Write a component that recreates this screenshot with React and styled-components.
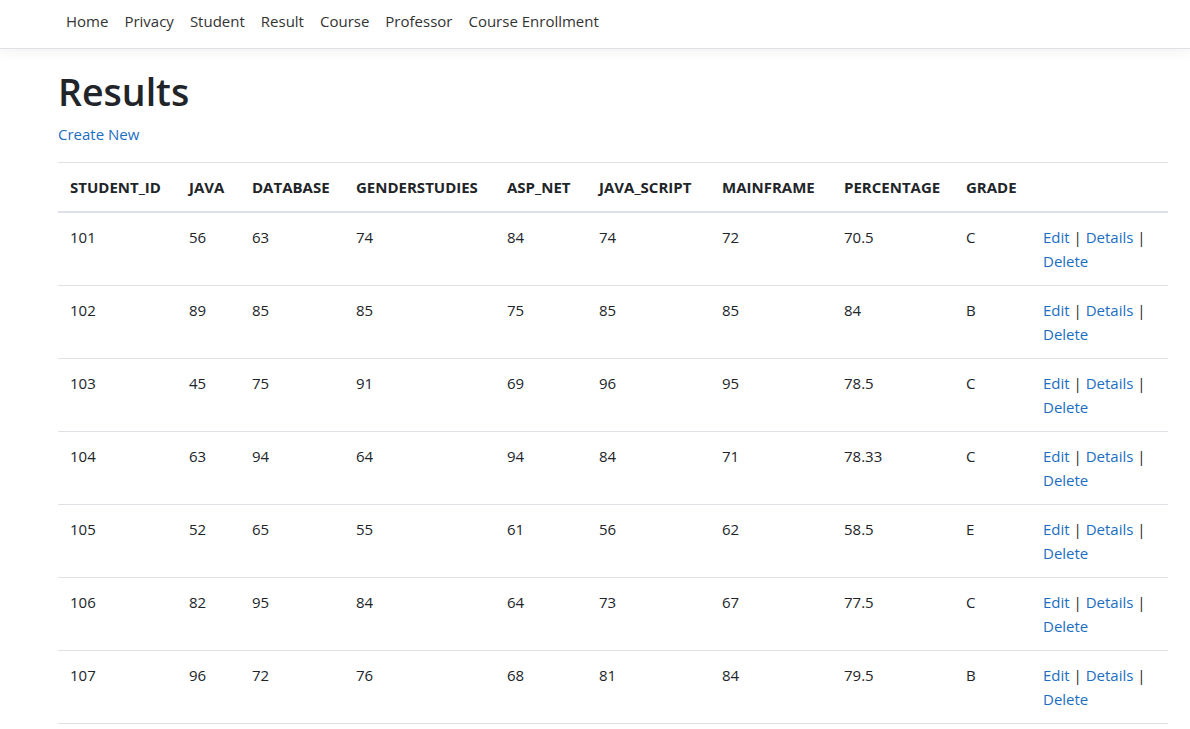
import React from "react";
import styled, { createGlobalStyle } from "styled-components";

const GlobalStyle = createGlobalStyle`
  html, body {
    margin: 0;
    padding: 0;
    background: #fff;
  }
  body {
    font-family: "Open Sans", "Noto Sans", "Liberation Sans", sans-serif;
    font-size: 15px;
    line-height: 24px;
    color: #212529;
  }
  * {
    box-sizing: border-box;
  }
`;

const navItems = [
  "Home",
  "Privacy",
  "Student",
  "Result",
  "Course",
  "Professor",
  "Course Enrollment",
];

const columns = [
  { key: "STUDENT_ID", width: 119 },
  { key: "JAVA", width: 63 },
  { key: "DATABASE", width: 104 },
  { key: "GENDERSTUDIES", width: 151 },
  { key: "ASP_NET", width: 92 },
  { key: "JAVA_SCRIPT", width: 123 },
  { key: "MAINFRAME", width: 122 },
  { key: "PERCENTAGE", width: 122 },
  { key: "GRADE", width: 77 },
];

const results = [
  [101, 56, 63, 74, 84, 74, 72, "70.5", "C"],
  [102, 89, 85, 85, 75, 85, 85, "84", "B"],
  [103, 45, 75, 91, 69, 96, 95, "78.5", "C"],
  [104, 63, 94, 64, 94, 84, 71, "78.33", "C"],
  [105, 52, 65, 55, 61, 56, 62, "58.5", "E"],
  [106, 82, 95, 84, 64, 73, 67, "77.5", "C"],
  [107, 96, 72, 76, 68, 81, 84, "79.5", "B"],
];

const App = () => {
  return (
    <>
      <GlobalStyle />
      <Navbar>
        <NavInner>
          {navItems.map((item) => (
            <NavLink key={item} href="#">
              {item}
            </NavLink>
          ))}
        </NavInner>
      </Navbar>
      <Main>
        <Title>Results</Title>
        <Paragraph>
          <Link href="#">Create New</Link>
        </Paragraph>
        <Table>
          <colgroup>
            {columns.map((c) => (
              <col key={c.key} style={{ width: c.width }} />
            ))}
            <col />
          </colgroup>
          <thead>
            <tr>
              {columns.map((c) => (
                <HeadCell key={c.key}>{c.key}</HeadCell>
              ))}
              <HeadCell />
            </tr>
          </thead>
          <tbody>
            {results.map((row) => (
              <tr key={row[0]}>
                {row.map((value, i) => (
                  <Cell key={i}>{value}</Cell>
                ))}
                <Cell>
                  <Link href="#">Edit</Link> | <Link href="#">Details</Link> |{" "}
                  <Link href="#">Delete</Link>
                </Cell>
              </tr>
            ))}
          </tbody>
        </Table>
      </Main>
    </>
  );
};

const Navbar = styled.header`
  height: 49px;
  background: #fff;
  border-bottom: 1px solid #dee2e6;
  box-shadow: 0 0.25rem 0.75rem rgba(0, 0, 0, 0.05);
  margin-bottom: 19px;
`;

const NavInner = styled.nav`
  display: flex;
  align-items: center;
  height: 100%;
  padding: 0 58px;
`;

const NavLink = styled.a`
  color: #333;
  text-decoration: none;
  padding: 0 8px;
  line-height: 24px;
  margin-top: -7px;
`;

const Main = styled.main`
  padding: 0 0 0 58px;
  width: 1168px;
`;

const Title = styled.h1`
  font-size: 37.5px;
  font-weight: 600;
  line-height: 48px;
  margin: 0 0 6px;
`;

const Paragraph = styled.p`
  margin: 0 0 16px;
`;

const Link = styled.a`
  color: #1b6ec2;
  text-decoration: none;
`;

const Table = styled.table`
  width: 1110px;
  table-layout: fixed;
  border-collapse: collapse;
  color: #212529;
`;

const HeadCell = styled.th`
  text-align: left;
  font-weight: 700;
  padding: 12px;
  border-top: 1px solid #dee2e6;
  border-bottom: 2px solid #dee2e6;
  vertical-align: bottom;
  white-space: nowrap;
`;

const Cell = styled.td`
  padding: 12px;
  border-top: 1px solid #dee2e6;
  vertical-align: top;
  tr:last-child > & {
    border-bottom: 1px solid #dee2e6;
  }
`;

export default App;
